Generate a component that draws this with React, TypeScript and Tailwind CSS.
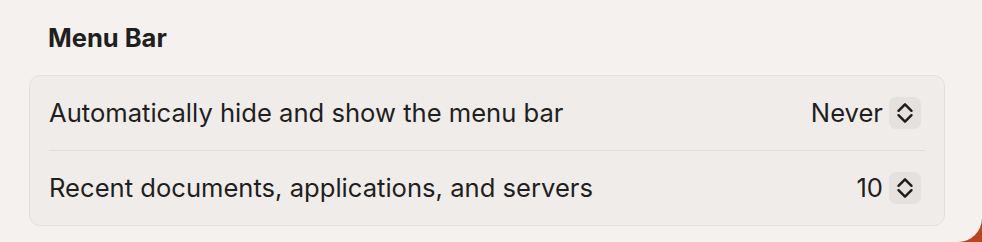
const Stepper = () => (
  <div className="w-[32px] h-[32px] rounded-[7px] bg-[#e5e1de] flex items-center justify-center">
    <svg width="18" height="24" viewBox="0 0 18 24" fill="none" stroke="#1c1c1c" strokeWidth="2.4" strokeLinecap="round" strokeLinejoin="round">
      <path d="M2.5 9.8 L9 3.3 L15.5 9.8" />
      <path d="M2.5 14.2 L9 20.7 L15.5 14.2" />
    </svg>
  </div>
);

const Row = ({ label, value }: { label: string; value: string }) => (
  <div className="flex items-center justify-between h-[74px]">
    <span>{label}</span>
    <div className="flex items-center gap-[6px]">
      <span>{value}</span>
      <Stepper />
    </div>
  </div>
);

export default function App() {
  return (
    <div className="w-[982px] h-[242px] bg-[#b9441d]">
      <div
        className="w-full h-full bg-[#f5f1ee] rounded-br-[24px] text-[#1f1f1f] pt-[22px] pl-[29px] pr-[37px]"
        style={{ fontFamily: "Inter, 'Noto Sans', sans-serif" }}
      >
        <h2 className="text-[25.5px] font-bold leading-[32px] pl-[19px]">Menu Bar</h2>
        <div className="mt-[21px] rounded-[11px] border border-[#e4e0dd] bg-[#f0ecea] pl-[19px] pr-[23px] text-[25.6px]">
          <Row label="Automatically hide and show the menu bar" value="Never" />
          <div className="h-[1px] bg-[#e2deda] mr-[-4px]" />
          <Row label="Recent documents, applications, and servers" value="10" />
        </div>
      </div>
    </div>
  );
}
